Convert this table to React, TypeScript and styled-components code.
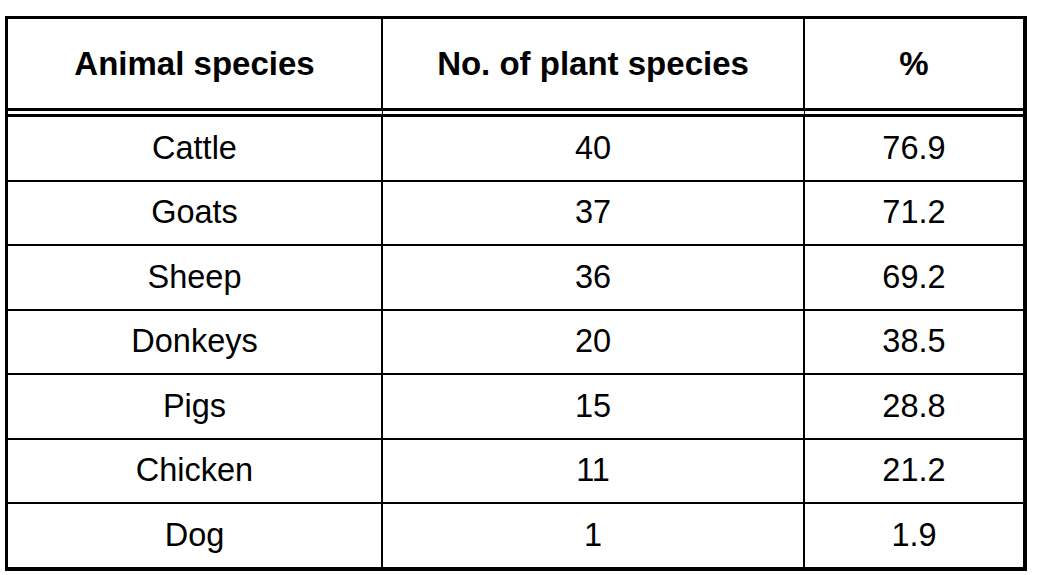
import React from 'react';
import styled, { createGlobalStyle } from 'styled-components';

const GlobalStyle = createGlobalStyle`
  html, body {
    margin: 0;
    padding: 0;
    background: #ffffff;
  }
  body {
    font-family: "Liberation Sans", Arial, sans-serif;
    color: #000000;
  }
`;

const Page = styled.div`
  padding: 16px 0 0 5px;
`;

const Table = styled.table`
  border-collapse: separate;
  border-spacing: 0;
  width: 1022px;
  table-layout: fixed;
  border-style: solid;
  border-color: #000;
  border-width: 3px 4px 4px 3px;
`;

const HeadCell = styled.th<{ $last?: boolean }>`
  height: 89px;
  padding: 0;
  font-size: 33px;
  font-weight: 700;
  text-align: center;
  vertical-align: middle;
  border-bottom: 9px double #000;
  border-right: ${(p) => (p.$last ? 'none' : '2px solid #000')};
`;

const Cell = styled.td<{ $last?: boolean; $bottom?: boolean }>`
  height: 62.5px;
  padding: 0;
  font-size: 32.5px;
  text-align: center;
  vertical-align: middle;
  border-bottom: ${(p) => (p.$bottom ? 'none' : '2px solid #000')};
  border-right: ${(p) => (p.$last ? 'none' : '2px solid #000')};
`;

const rows: [string, string, string][] = [
  ['Cattle', '40', '76.9'],
  ['Goats', '37', '71.2'],
  ['Sheep', '36', '69.2'],
  ['Donkeys', '20', '38.5'],
  ['Pigs', '15', '28.8'],
  ['Chicken', '11', '21.2'],
  ['Dog', '1', '1.9'],
];

const App: React.FC = () => {
  return (
    <Page>
      <GlobalStyle />
      <Table>
        <colgroup>
          <col style={{ width: 375 }} />
          <col style={{ width: 422 }} />
          <col style={{ width: 218 }} />
        </colgroup>
        <thead>
          <tr>
            <HeadCell>Animal species</HeadCell>
            <HeadCell>No. of plant species</HeadCell>
            <HeadCell $last>%</HeadCell>
          </tr>
        </thead>
        <tbody>
          {rows.map((r, i) => (
            <tr key={r[0]}>
              <Cell $bottom={i === rows.length - 1}>{r[0]}</Cell>
              <Cell $bottom={i === rows.length - 1}>{r[1]}</Cell>
              <Cell $last $bottom={i === rows.length - 1}>{r[2]}</Cell>
            </tr>
          ))}
        </tbody>
      </Table>
    </Page>
  );
};

export default App;
